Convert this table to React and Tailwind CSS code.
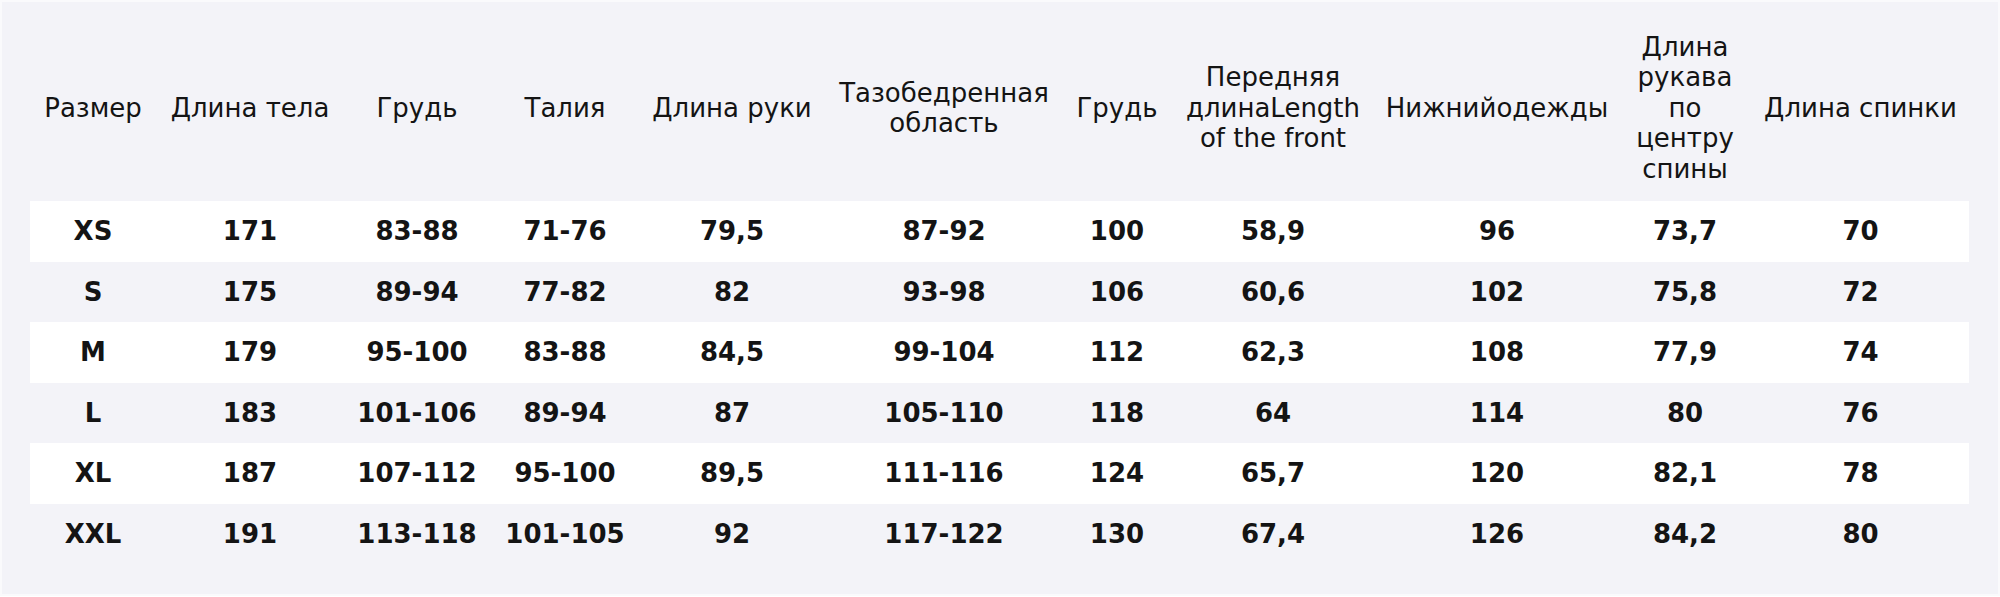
const headers = [
  "Размер",
  "Длина тела",
  "Грудь",
  "Талия",
  "Длина руки",
  "Тазобедренная область",
  "Грудь",
  "Передняя длинаLength of the front",
  "Нижнийодежды",
  "Длина рукава по центру спины",
  "Длина спинки",
];

// column widths measured off the reference, px
const widths = [126, 188, 146, 150, 184, 240, 106, 206, 242, 134, 217];

const rows = [
  ["XS", "171", "83-88", "71-76", "79,5", "87-92", "100", "58,9", "96", "73,7", "70"],
  ["S", "175", "89-94", "77-82", "82", "93-98", "106", "60,6", "102", "75,8", "72"],
  ["M", "179", "95-100", "83-88", "84,5", "99-104", "112", "62,3", "108", "77,9", "74"],
  ["L", "183", "101-106", "89-94", "87", "105-110", "118", "64", "114", "80", "76"],
  ["XL", "187", "107-112", "95-100", "89,5", "111-116", "124", "65,7", "120", "82,1", "78"],
  ["XXL", "191", "113-118", "101-105", "92", "117-122", "130", "67,4", "126", "84,2", "80"],
];

const SizeTable = () => {
  return (
    <div className="bg-[#fafafc] p-[2px]">
      <div className="bg-[#f3f3f8] pl-[28px] pr-[29px] pb-[30px] font-['DejaVu_Sans',sans-serif] text-[26px] text-[#141414]">
        <table className="w-[1939px] table-fixed border-collapse">
          <colgroup>
            {widths.map((w, i) => (
              <col key={i} style={{ width: w }} />
            ))}
          </colgroup>
          <thead>
            <tr>
              {headers.map((h, i) => (
                <th
                  key={i}
                  className="px-[8px] pt-[30px] pb-[17px] text-center align-middle font-normal leading-[30.4px]"
                >
                  {h}
                </th>
              ))}
            </tr>
          </thead>
          <tbody>
            {rows.map((r, i) => (
              <tr key={r[0]} className={i % 2 === 0 ? "bg-white" : ""}>
                {r.map((c, j) => (
                  <td
                    key={j}
                    className="h-[60.5px] px-[8px] text-center align-middle font-bold leading-[30px]"
                  >
                    {c}
                  </td>
                ))}
              </tr>
            ))}
          </tbody>
        </table>
      </div>
    </div>
  );
};

export default function App() {
  return <SizeTable />;
}
